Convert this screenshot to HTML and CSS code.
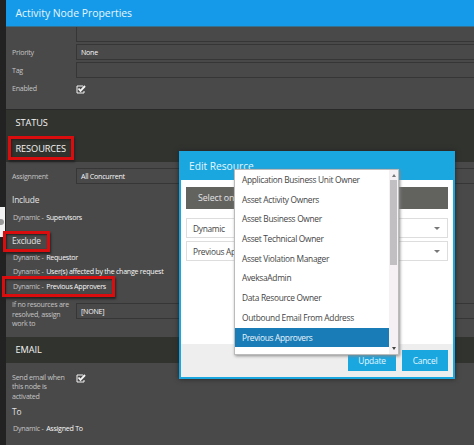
FILE: index.html
```html
<!DOCTYPE html>
<html lang="en">
<head>
<meta charset="utf-8">
<title>Activity Node Properties</title>
<link rel="stylesheet" href="styles.css">
</head>
<body>
<div class="app">
  <aside class="rail"><div class="rail-tab"><span class="rail-dot"></span></div></aside>
  <main class="panel">
    <header class="panel-header">Activity Node Properties</header>
    <section class="general">
      <div class="field area"></div>
      <div class="row"><label>Priority</label><div class="field">None</div></div>
      <div class="row"><label>Tag</label><div class="field"></div></div>
      <div class="row"><label>Enabled</label><svg class="check" viewBox="0 0 10 9"><path class="check-box" d="M7 1H1v7h7V6"/><path class="check-mark" d="M2.5 3.5 4.5 5.8 9 1"/></svg></div>
    </section>
    <div class="bands">
      <h2 class="status">STATUS</h2>
      <h2 class="resources"><span class="mark">RESOURCES</span></h2>
    </div>
    <section class="assign">
      <div class="row"><label>Assignment</label><div class="field">All Concurrent</div></div>
      <h3 class="include">Include</h3>
      <p class="supervisors">Dynamic - <b>Supervisors</b></p>
      <h3 class="exclude"><span class="mark">Exclude</span></h3>
      <p>Dynamic - <b>Requestor</b></p>
      <p>Dynamic - <b>User(s) affected by the change request</b></p>
      <p class="previous"><span class="mark">Dynamic - <b>Previous Approvers</b></span></p>
      <div class="row fallback"><label>If no resources are<br>resolved, assign<br>work to</label><div class="field">[NONE]</div></div>
    </section>
    <h2 class="email">EMAIL</h2>
    <section class="notify">
      <div class="row send"><label>Send email when<br>this node is<br>activated</label><svg class="check" viewBox="0 0 10 9"><path class="check-box" d="M7 1H1v7h7V6"/><path class="check-mark" d="M2.5 3.5 4.5 5.8 9 1"/></svg></div>
      <h3>To</h3>
      <p>Dynamic - <b>Assigned To</b></p>
    </section>
  </main>
</div>
<div class="dialog">
  <header class="dialog-header">Edit Resource</header>
  <div class="dialog-body">
    <div class="prompt">Select one</div>
    <div class="select">Dynamic<i class="caret"></i></div>
    <div class="select">Previous Approvers<i class="caret"></i></div>
  </div>
  <footer class="dialog-footer"><button class="update">Update</button><button class="cancel">Cancel</button></footer>
  <div class="menu">
    <ul>
      <li>Application Business Unit Owner</li>
      <li>Asset Activity Owners</li>
      <li>Asset Business Owner</li>
      <li>Asset Technical Owner</li>
      <li>Asset Violation Manager</li>
      <li>AveksaAdmin</li>
      <li>Data Resource Owner</li>
      <li>Outbound Email From Address</li>
      <li class="selected">Previous Approvers</li>
    </ul>
    <div class="scrollbar"><i class="up"></i><div class="thumb"></div><i class="down"></i></div>
  </div>
</div>
</body>
</html>
```
FILE: styles.css
```css
*, *::after { box-sizing: border-box; }
body { margin: 0; width: 474px; height: 445px; overflow: hidden; font-family: "Open Sans", "Noto Sans", sans-serif; font-size: 7.1px; letter-spacing: -0.26px; color: #c4c4c4; background: #494949; }
h2, h3, p, ul { margin: 0; padding: 0; font-weight: 400; }
b { font-weight: 400; color: #f8f8f8; margin-left: 1px; }
.app { display: flex; height: 445px; }
.rail { width: 6px; flex: none; background: #222; padding-top: 207px; }
.rail-tab { width: 5px; height: 30px; background: #f2f2f2; padding-top: 12px; overflow: hidden; }
.rail-dot { display: block; width: 6px; height: 6px; margin-left: -2px; border-radius: 50%; background: #999; }
.panel { flex: 1; min-width: 0; }
.panel-header { height: 27px; padding-left: 9.5px; line-height: 26px; font-size: 10.4px; letter-spacing: 0; color: #e6f6ff; background: #149ae8; border-bottom: 1px solid #35708f; }
.general { height: 82px; }
.field { flex: 1; height: 16px; border: 1px solid #363636; border-right: 0; padding-left: 4px; line-height: 14px; color: #f8f8f8; }
.area { height: 15px; margin-left: 70px; border-top: 0; }
.row { display: flex; align-items: center; height: 18px; padding-left: 6px; }
.row label { width: 64px; flex: none; line-height: 9.3px; padding-top: 1px; }
.general .area + .row { margin-top: 1px; }
.check { width: 10px; height: 9px; overflow: visible; margin: 2px 0 0 0; }
.check path { fill: none; stroke: #f4f4f4; }
.check .check-mark { stroke-width: 1.9; }
.bands { height: 53px; background: #31332f; border-top: 1px solid #292929; }
h2 { font-size: 9.2px; letter-spacing: -0.08px; color: #f4f4f4; padding-left: 9.5px; height: 27px; line-height: 25px; }
.resources { line-height: 24px; }
h3 { font-size: 8.4px; letter-spacing: -0.2px; color: #e2e2e2; padding-left: 6px; height: 16px; line-height: 16px; }
p { padding-left: 7px; height: 14.7px; line-height: 14.7px; white-space: nowrap; }
.mark { position: relative; }
.mark::after { content: ""; position: absolute; border: 3px solid #d90d0d; box-shadow: 1px 2px 2px #222, inset 1px 1px 2px #222; }
.resources .mark::after { left: -8px; top: -6px; width: 66px; height: 24px; }
.exclude .mark::after { left: -9px; top: -4px; width: 47px; height: 21px; }
.previous .mark::after { left: -11px; top: -5px; width: 113px; height: 21px; }
.assign { height: 175px; padding-top: 5px; }
.include { margin-top: 7px; }
.supervisors { margin-top: 2px; }
.exclude { margin-top: 8px; margin-bottom: 1px; }
.fallback { height: 28px; margin-top: 5px; }
.fallback label { margin-top: 2px; }
.fallback .field { margin-top: -3px; }
.email { background: #31332f; height: 26px; line-height: 26px; }
.notify { padding-top: 9px; }
.send { height: 29px; align-items: flex-start; }
.send .check { margin-top: 2px; }
.notify h3 { margin-top: 3px; }
.notify p { margin-top: 1px; }
.dialog { position: absolute; left: 179px; top: 151px; width: 276px; height: 228px; display: flex; flex-direction: column; border: 2px solid #1aa7e0; background: #fff; color: #444; box-shadow: 0 0 5px #252525; font-size: 8.4px; letter-spacing: -0.31px; }
.dialog-header { height: 27px; padding-left: 8px; line-height: 27px; font-size: 10.2px; letter-spacing: 0; color: #e4f7ff; background: #1aa7e0; }
.dialog-body { flex: 1; padding: 7px 5px 0; }
.prompt { height: 22px; line-height: 22px; padding-left: 12px; margin-bottom: 9px; background: #62625f; color: #e4e4e4; font-size: 8.8px; letter-spacing: -0.1px; }
.select { display: flex; justify-content: space-between; align-items: center; height: 20px; margin-bottom: 3px; padding: 0 7px 0 6px; border: 1px solid #ddd; }
.caret { border: 3px solid transparent; border-top: 3px solid #777; border-bottom: 0; }
.dialog-footer { display: flex; justify-content: flex-end; gap: 6px; height: 33px; padding: 6px 5px 0 0; background: #eee; }
button { height: 21px; padding: 0; border: 0; font: inherit; letter-spacing: -0.2px; color: #e4f7ff; background: #1aa7e0; }
.update { width: 48px; }
.cancel { width: 46px; }
.menu { position: absolute; left: 53px; top: 16px; width: 165px; height: 186px; display: flex; background: #fff; border: 1px solid #bbb; box-shadow: 1px 1px 3px #888; }
.menu ul { flex: 1; list-style: none; }
.menu li { height: 19.7px; line-height: 20px; padding-left: 7px; white-space: nowrap; }
.menu li.selected { color: #e8f5fc; background: #197cb7; }
.scrollbar { width: 9px; display: flex; flex-direction: column; align-items: center; background: #f4f0f4; }
.thumb { width: 7px; height: 85px; margin-top: 3px; background: #c2bfc3; }
.up, .down { border: 2px solid transparent; }
.up { margin-top: 4px; border-top: 0; border-bottom: 3px solid #777; }
.down { margin-top: auto; margin-bottom: 4px; border-bottom: 0; border-top: 3px solid #444; }
```
